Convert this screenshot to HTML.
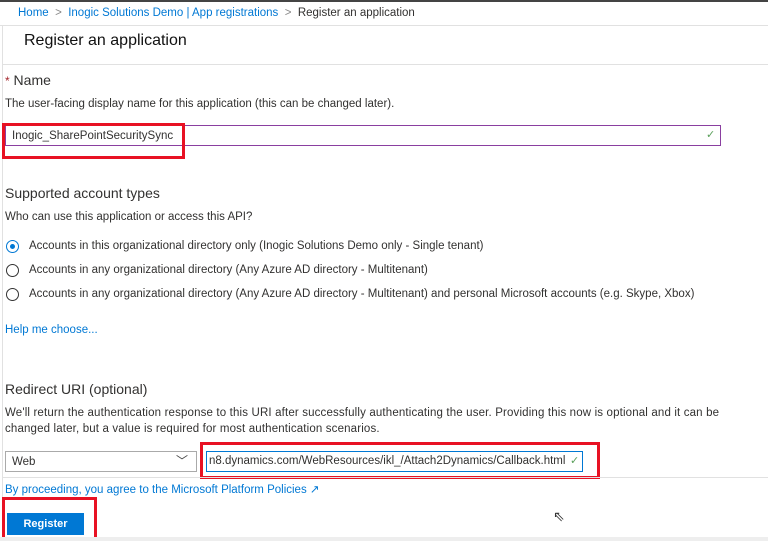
<!DOCTYPE html><html><head><style>
body{margin:0;width:768px;height:541px;overflow:hidden;background:#fff;font-family:"Liberation Sans",sans-serif;color:#323130;position:relative}
.a{position:absolute;white-space:nowrap}
.s{font-size:11.5px}
.h{font-size:14px}
.link{color:#0078d4}
.red{position:absolute;border:3px solid #e81123;box-sizing:border-box}
.rad{position:absolute;left:6px;width:13px;height:13px;border:1px solid #333;border-radius:50%;box-sizing:border-box}
</style></head><body>
<div class="a" style="left:0;top:0;width:768px;height:2px;background:#444"></div>
<div class="a s" style="left:18px;top:7px"><span class="link">Home</span> <span style="color:#888">&nbsp;&gt;&nbsp;</span> <span class="link">Inogic Solutions Demo | App registrations</span> <span style="color:#888">&nbsp;&gt;&nbsp;</span> Register an application</div>
<div class="a" style="left:0;top:25px;width:768px;height:1px;background:#e1e1e1"></div>
<div class="a" style="left:2px;top:25px;width:1px;height:516px;background:#e1e1e1"></div>
<div class="a" style="left:24px;top:32px;font-size:16px;color:#111">Register an application</div>
<div class="a" style="left:2px;top:64px;width:766px;height:1px;background:#e1e1e1"></div>
<div class="a h" style="left:5px;top:72px"><span style="color:#a4262c;font-size:12px">*</span> Name</div>
<div class="a s" style="left:5px;top:98px">The user-facing display name for this application (this can be changed later).</div>
<div class="a" style="left:5px;top:125px;width:716px;height:21px;border:1px solid #8a3fa0;box-sizing:border-box"></div>
<div class="a s" style="left:12px;top:130px">Inogic_SharePointSecuritySync</div>
<div class="a" style="left:706px;top:128px;color:#5ba05b;font-size:11px">✓</div>
<div class="red" style="left:2px;top:123px;width:183px;height:36px"></div>
<div class="a h" style="left:5px;top:185px">Supported account types</div>
<div class="a s" style="left:5px;top:211px">Who can use this application or access this API?</div>
<div class="rad" style="top:240px;border-color:#0078d4"><div style="position:absolute;left:3px;top:3px;width:5px;height:5px;border-radius:50%;background:#0078d4"></div></div>
<div class="a s" style="left:29px;top:240px">Accounts in this organizational directory only (Inogic Solutions Demo only - Single tenant)</div>
<div class="rad" style="top:264px"></div>
<div class="a s" style="left:29px;top:264px">Accounts in any organizational directory (Any Azure AD directory - Multitenant)</div>
<div class="rad" style="top:288px"></div>
<div class="a s" style="left:29px;top:288px">Accounts in any organizational directory (Any Azure AD directory - Multitenant) and personal Microsoft accounts (e.g. Skype, Xbox)</div>
<div class="a s link" style="left:5px;top:324px">Help me choose...</div>
<div class="a h" style="left:5px;top:381px">Redirect URI (optional)</div>
<div class="a s" style="left:5px;top:407px;letter-spacing:0.15px">We'll return the authentication response to this URI after successfully authenticating the user. Providing this now is optional and it can be</div>
<div class="a s" style="left:5px;top:423px;letter-spacing:0.15px">changed later, but a value is required for most authentication scenarios.</div>
<div class="a" style="left:5px;top:451px;width:192px;height:21px;border:1px solid #aaa;box-sizing:border-box"></div>
<div class="a s" style="left:12px;top:456px">Web</div>
<div class="a" style="left:176px;top:452px;font-size:12px;color:#444">﹀</div>
<div class="a" style="left:206px;top:451px;width:377px;height:21px;border:1px solid #0078d4;box-sizing:border-box"></div>
<div class="a s" style="left:209px;top:455px;width:360px;overflow:hidden">n8.dynamics.com/WebResources/ikl_/Attach2Dynamics/Callback.html</div>
<div class="a" style="left:570px;top:454px;color:#5ba05b;font-size:11px">✓</div>
<div class="red" style="left:200px;top:442px;width:400px;height:37px"></div>
<div class="a" style="left:2px;top:477px;width:766px;height:1px;background:#e1e1e1"></div>
<div class="a s link" style="left:5px;top:482px">By proceeding, you agree to the Microsoft Platform Policies ↗</div>
<div class="a" style="left:7px;top:513px;width:77px;height:22px;background:#0078d4;color:#fff;font-size:11px;font-weight:bold;text-align:center;line-height:22px">Register</div>
<div class="red" style="left:2px;top:497px;width:95px;height:44px;border-bottom:none"></div>
<div class="a" style="left:0;top:537px;width:768px;height:4px;background:#eee"></div>
<div class="a" style="left:553px;top:508px;font-size:14px;color:#333">⇖</div>
</body></html>
